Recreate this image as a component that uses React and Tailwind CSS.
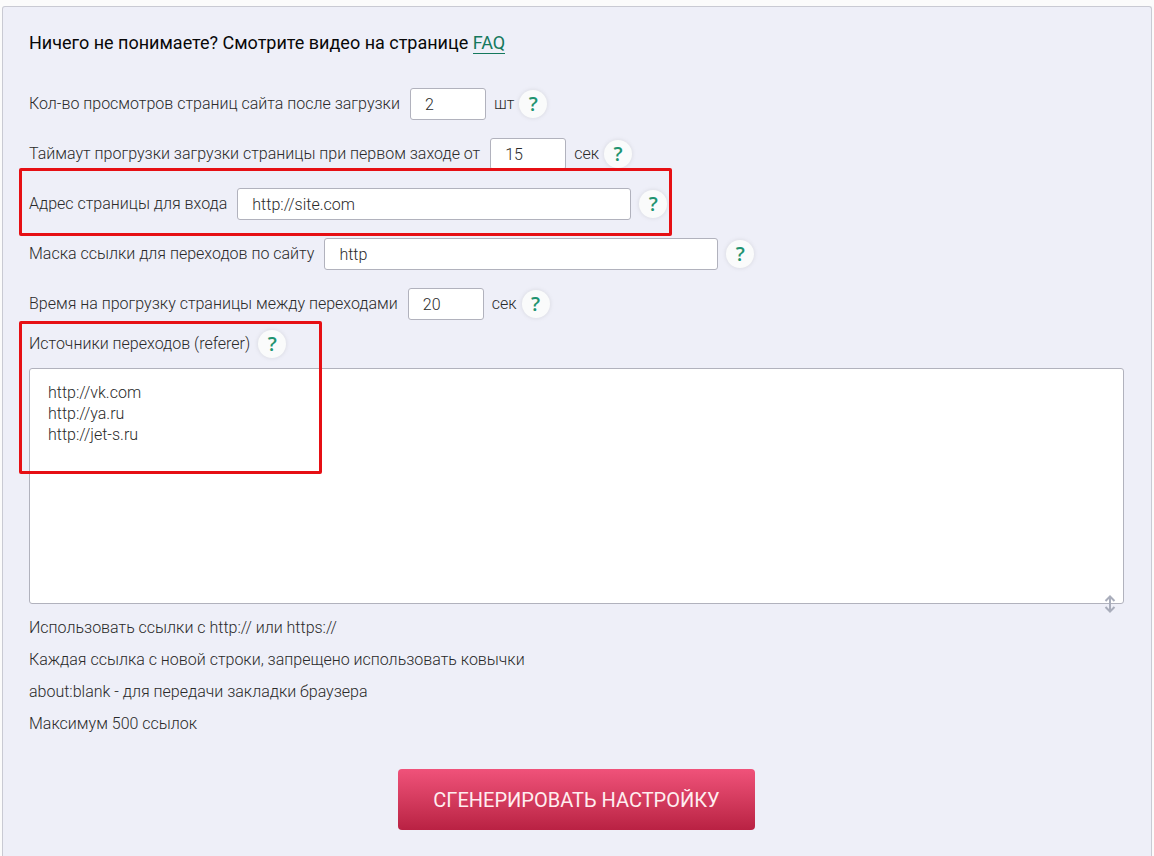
import { useId } from "react";

const fieldStyle =
  "h-8 rounded-[3px] border border-[#b1b2bd] bg-white px-[14px] text-base font-light text-[#2a2a2a] outline-none focus:border-[#1b8a6b]";

function Help({ topic }) {
  return (
    <button
      type="button"
      aria-label={topic}
      className="flex size-7 shrink-0 items-center justify-center rounded-full bg-[#fafbfb] font-['Open_Sans',sans-serif] text-xl leading-7 font-semibold text-[#1f9470] shadow-[0_0_4px_rgba(120,120,120,0.2)]"
    >
      ?
    </button>
  );
}

function Field({ label, value, unit, wide, marked }) {
  const id = useId();
  return (
    <div className="relative flex h-8 max-w-full items-center self-start">
      <label htmlFor={id} className="mr-[10px]">
        {label}
      </label>
      <input
        id={id}
        type="text"
        defaultValue={value}
        className={`${fieldStyle} ${wide ? "w-[394px] min-w-0" : "w-[76px]"} mr-2`}
      />
      {unit && <span className="mr-[5px]">{unit}</span>}
      <Help topic={label} />
      {marked && (
        <span className="pointer-events-none absolute -top-[20px] -right-[5px] -bottom-[16px] -left-[10px] z-10 rounded-[2px] border-3 border-[#e60f14]" />
      )}
    </div>
  );
}

export default function App() {
  return (
    <div className="min-h-screen bg-[#fbfbfb] px-0.5 pt-1.5 font-[Roboto,sans-serif] text-base font-light text-[#2a2a2a]">
      <main className="min-h-[calc(100vh-6px)] rounded-t-[3px] border border-b-0 border-[#c9cad3] bg-[#eeeff8] pt-6 pr-[27px] pb-6 pl-[26px]">
        <p className="text-lg leading-6 font-normal text-[#080808]">
          Ничего не понимаете? Смотрите видео на странице{" "}
          <a href="#faq" className="border-b border-[#14785d] text-[#14785d]">
            FAQ
          </a>
        </p>

        <form onSubmit={(event) => event.preventDefault()}>
          <div className="mt-[33px] flex flex-col gap-[18px]">
            <Field label="Кол-во просмотров страниц сайта после загрузки" value="2" unit="шт" />
            <Field label="Таймаут прогрузки загрузки страницы при первом заходе от" value="15" unit="сек" />
            <Field label="Адрес страницы для входа" value="http://site.com" wide marked />
            <Field label="Маска ссылки для переходов по сайту" value="http" wide />
            <Field label="Время на прогрузку страницы между переходами" value="20" unit="сек" />
          </div>

          <section className="relative mt-2">
            <div className="flex h-8 items-center gap-2">
              <label htmlFor="referers">Источники переходов (referer)</label>
              <Help topic="Источники переходов" />
            </div>
            <div className="relative mt-2">
              <textarea
                id="referers"
                defaultValue={"http://vk.com\nhttp://ya.ru\nhttp://jet-s.ru"}
                className="block h-[236px] w-full resize-none rounded-[3px] border border-[#b1b2bd] bg-white px-[18px] py-[13px] text-base leading-[21px] font-light text-[#2a2a2a] outline-none"
              />
              <svg
                viewBox="0 0 12 18"
                className="absolute right-2 -bottom-[9px] h-[18px] w-3"
                fill="none"
                stroke="#a9adbb"
                strokeWidth="2"
                aria-hidden="true"
              >
                <path d="M6 2v14M1.5 6 6 1.5 10.5 6M1.5 12 6 16.5 10.5 12" />
              </svg>
            </div>
            <span className="pointer-events-none absolute -top-[7px] -left-[10px] h-[153px] w-[303px] rounded-[2px] border-3 border-[#e60f14]" />
          </section>

          <div className="mt-2 leading-8">
            <p>Использовать ссылки с http:// или https://</p>
            <p>Каждая ссылка с новой строки, запрещено использовать ковычки</p>
            <p>about:blank - для передачи закладки браузера</p>
            <p>Максимум 500 ссылок</p>
          </div>

          <button
            type="submit"
            className="mx-auto mt-[29px] block h-[61px] rounded-[4px] bg-linear-to-b from-[#f0527a] to-[#b92143] px-[35px] text-xl font-normal text-[#ffeef0]"
          >
            СГЕНЕРИРОВАТЬ НАСТРОЙКУ
          </button>
        </form>
      </main>
    </div>
  );
}
